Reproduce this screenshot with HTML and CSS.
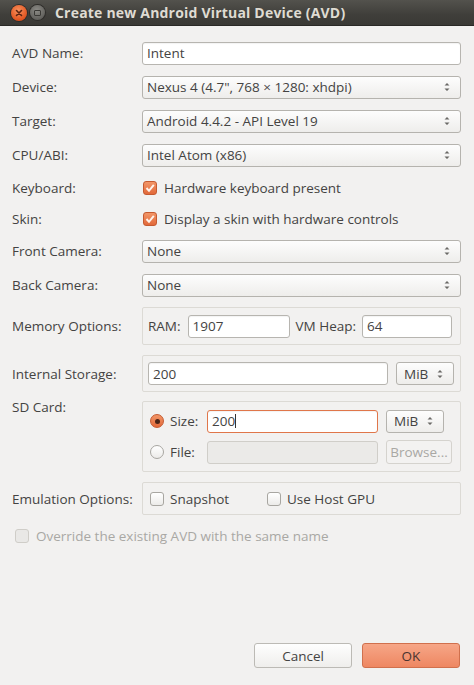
FILE: index.html
```html
<!DOCTYPE html>
<html>
<head>
<meta charset="utf-8">
<link rel="stylesheet" href="styles.css">
</head>
<body>
<div class="window">
  <div class="titlebar">
    <span class="wbtn close"><svg width="8" height="8" viewBox="0 0 8 8"><path d="M1.5 1.5 L6.5 6.5 M6.5 1.5 L1.5 6.5" stroke="#5a2412" stroke-width="1.6" stroke-linecap="round"/></svg></span>
    <span class="wbtn min"><span class="sq"></span></span>
    <span class="title">Create new Android Virtual Device (AVD)</span>
  </div>

  <div class="content">
    <div class="row h34"><span class="lbl">AVD Name:</span><div class="input">Intent</div></div>
    <div class="row h34"><span class="lbl">Device:</span><div class="select"><span>Nexus 4 (4.7", 768 × 1280: xhdpi)</span><svg class="spin" width="6" height="10" viewBox="0 0 6 10"><path d="M0.5 3.5 L3 1 L5.5 3.5Z M0.5 6.5 L3 9 L5.5 6.5Z" fill="#6a6966"/></svg></div></div>
    <div class="row h34"><span class="lbl">Target:</span><div class="select"><span>Android 4.4.2 - API Level 19</span><svg class="spin" width="6" height="10" viewBox="0 0 6 10"><path d="M0.5 3.5 L3 1 L5.5 3.5Z M0.5 6.5 L3 9 L5.5 6.5Z" fill="#6a6966"/></svg></div></div>
    <div class="row h34"><span class="lbl">CPU/ABI:</span><div class="select"><span>Intel Atom (x86)</span><svg class="spin" width="6" height="10" viewBox="0 0 6 10"><path d="M0.5 3.5 L3 1 L5.5 3.5Z M0.5 6.5 L3 9 L5.5 6.5Z" fill="#6a6966"/></svg></div></div>
    <div class="row h31"><span class="lbl">Keyboard:</span><div class="check"><span class="cb on"><svg width="12" height="12" viewBox="0 0 12 12"><path d="M2.5 6 L5 8.8 L9.8 2.8" fill="none" stroke="#fff3ec" stroke-width="2"/></svg></span><span class="ct">Hardware keyboard present</span></div></div>
    <div class="row h31"><span class="lbl">Skin:</span><div class="check"><span class="cb on"><svg width="12" height="12" viewBox="0 0 12 12"><path d="M2.5 6 L5 8.8 L9.8 2.8" fill="none" stroke="#fff3ec" stroke-width="2"/></svg></span><span class="ct">Display a skin with hardware controls</span></div></div>
    <div class="row h34"><span class="lbl">Front Camera:</span><div class="select"><span>None</span><svg class="spin" width="6" height="10" viewBox="0 0 6 10"><path d="M0.5 3.5 L3 1 L5.5 3.5Z M0.5 6.5 L3 9 L5.5 6.5Z" fill="#6a6966"/></svg></div></div>
    <div class="row h34"><span class="lbl">Back Camera:</span><div class="select"><span>None</span><svg class="spin" width="6" height="10" viewBox="0 0 6 10"><path d="M0.5 3.5 L3 1 L5.5 3.5Z M0.5 6.5 L3 9 L5.5 6.5Z" fill="#6a6966"/></svg></div></div>

    <div class="row grp-row mem"><span class="lbl">Memory Options:</span>
      <div class="group g-mem">
        <span class="gl">RAM:</span><div class="input ram">1907</div>
        <span class="gl vm">VM Heap:</span><div class="input heap">64</div>
      </div>
    </div>

    <div class="row grp-row stor"><span class="lbl">Internal Storage:</span>
      <div class="group g-stor">
        <div class="input istor">200</div>
        <div class="select unit"><span>MiB</span><svg class="spin" width="6" height="10" viewBox="0 0 6 10"><path d="M0.5 3.5 L3 1 L5.5 3.5Z M0.5 6.5 L3 9 L5.5 6.5Z" fill="#6a6966"/></svg></div>
      </div>
    </div>

    <div class="row grp-row sd"><span class="lbl top">SD Card:</span>
      <div class="group g-sd">
        <div class="sdline">
          <span class="radio on"><span class="dot"></span></span><span class="rl">Size:</span>
          <div class="input focus sdin">200<span class="caret"></span></div>
          <div class="select unit"><span>MiB</span><svg class="spin" width="6" height="10" viewBox="0 0 6 10"><path d="M0.5 3.5 L3 1 L5.5 3.5Z M0.5 6.5 L3 9 L5.5 6.5Z" fill="#6a6966"/></svg></div>
        </div>
        <div class="sdline">
          <span class="radio"></span><span class="rl">File:</span>
          <div class="input disabled sdin"></div>
          <div class="btn browse">Browse...</div>
        </div>
      </div>
    </div>

    <div class="row grp-row emu"><span class="lbl">Emulation Options:</span>
      <div class="group g-emu">
        <span class="cb"></span><span class="ct snap">Snapshot</span>
        <span class="cb"></span><span class="ct">Use Host GPU</span>
      </div>
    </div>

    <div class="override"><span class="cb dis"></span><span class="ct">Override the existing AVD with the same name</span></div>
  </div>

  <div class="buttons">
    <div class="btn big">Cancel</div>
    <div class="btn big ok">OK</div>
  </div>
</div>
</body>
</html>
```

FILE: styles.css
```css
* { box-sizing: border-box; }
html, body { margin: 0; padding: 0; }
body {
  width: 474px;
  height: 685px;
  overflow: hidden;
  background: #f2f1f0;
  font-family: "Open Sans", "DejaVu Sans", sans-serif;
  font-size: 13.5px;
  color: #444342;
}
.window {
  height: 685px;
  display: flex;
  flex-direction: column;
}
.titlebar {
  height: 26px;
  flex: none;
  background: linear-gradient(#53524d, #3f3e3a 60%, #3a3935);
  border-bottom: 1px solid #2a2926;
  display: flex;
  align-items: center;
  padding-left: 11px;
}
.wbtn {
  border-radius: 50%;
  display: flex;
  align-items: center;
  justify-content: center;
}
.close {
  width: 16px; height: 16px;
  background: radial-gradient(circle at 45% 35%, #f8915d, #e0531f 70%, #c2441a);
  box-shadow: 0 0 0 1px #2e2d2a;
}
.min {
  width: 15px; height: 15px;
  margin-left: 3px;
  background: radial-gradient(circle at 45% 35%, #8c8b86, #5f5e5a 75%);
  box-shadow: 0 0 0 1px #2e2d2a;
}
.min .sq {
  width: 7px; height: 6px;
  border: 1.5px solid #3a3935;
  border-radius: 1px;
}
.title {
  margin-left: 10px;
  color: #dfdbd2;
  font-weight: bold;
  font-size: 14px;
  letter-spacing: 0.2px;
}
.content {
  padding: 10px 13px 0 12px;
}
.row {
  display: grid;
  grid-template-columns: 130px 1fr;
  align-items: center;
}
.h34 { height: 34px; }
.h31 { height: 31px; }
.lbl { white-space: nowrap; }
.lbl.top { align-self: start; margin-top: -3px; }

.input {
  height: 23px;
  background: #fff;
  border: 1px solid #b7b5b0;
  border-radius: 3px;
  padding: 0 4px;
  display: flex;
  align-items: center;
  box-shadow: inset 0 1px 1px rgba(0,0,0,0.05);
}
.input.focus { border-color: #e0764a; }
.input.disabled { background: #ebeae8; border-color: #d0cec9; box-shadow: none; }
.caret { width: 1px; height: 14px; background: #333; margin-left: 0; }

.select {
  height: 23px;
  background: linear-gradient(#fdfdfd, #eeedeb);
  border: 1px solid #b5b3ae;
  border-radius: 3px;
  padding: 0 10px 0 4px;
  display: flex;
  align-items: center;
  justify-content: space-between;
}
.spin { flex: none; }

.check { display: flex; align-items: center; }
.cb {
  width: 14px; height: 14px;
  flex: none;
  border: 1px solid #a8a6a1;
  border-radius: 3px;
  background: linear-gradient(#ffffff, #ecebe9);
  display: flex;
  align-items: center;
  justify-content: center;
}
.cb.on {
  background: linear-gradient(#f29668, #e2693a);
  border-color: #c55a30;
}
.check .cb { margin-left: 1px; }
.check .ct { margin-left: 7px; white-space: nowrap; }

.grp-row { align-items: center; }
.group {
  border: 1px solid #dcdad5;
  border-radius: 2px;
  background: #f2f1f0;
}
.mem { margin-top: 5px; }
.g-mem {
  height: 38px;
  display: flex;
  align-items: center;
  padding: 0 6px 0 5px;
}
.g-mem .gl { white-space: nowrap; }
.ram { width: 102px; margin-left: 7px; }
.vm { margin-left: 6px; }
.heap { width: 90px; margin-left: 6px; }

.stor { margin-top: 10px; }
.g-stor {
  height: 37px;
  display: flex;
  align-items: center;
  padding: 0 6px 0 5px;
}
.istor { width: 240px; }
.unit { width: 58px; margin-left: 8px; padding-left: 7px; }

.sd { margin-top: 9px; }
.g-sd {
  height: 71px;
  padding: 7px 6px 0 7px;
  display: flex;
  flex-direction: column;
  gap: 7px;
}
.sdline { display: flex; align-items: center; height: 24px; }
.radio {
  width: 14px; height: 14px;
  flex: none;
  border-radius: 50%;
  border: 1px solid #a8a6a1;
  background: linear-gradient(#ffffff, #ecebe9);
  display: flex;
  align-items: center;
  justify-content: center;
}
.radio.on {
  background: linear-gradient(#f29668, #e2693a);
  border-color: #c55a30;
}
.radio .dot { width: 5px; height: 5px; border-radius: 50%; background: #4a2417; }
.rl { margin-left: 6px; width: 37px; }
.sdin { width: 171px; }
.btn {
  border: 1px solid #bcbab5;
  border-radius: 3px;
  background: linear-gradient(#fefefe, #efeeec);
  display: flex;
  align-items: center;
  justify-content: center;
}
.browse {
  width: 66px; height: 24px;
  margin-left: 8px;
  color: #a9a8a4;
  border-color: #d5d3ce;
  background: #f3f2f1;
}

.emu { margin-top: 10px; }
.g-emu {
  height: 33px;
  display: flex;
  align-items: center;
  padding-left: 7px;
}
.g-emu .ct { margin-left: 6px; }
.g-emu .snap { width: 97px; }

.override {
  display: flex;
  align-items: center;
  height: 30px;
  margin-top: 6px;
  padding-left: 3px;
  color: #a9a8a4;
}
.cb.dis { border-color: #cfcdc8; background: #e9e8e6; }
.override .ct { margin-left: 7px; }

.buttons {
  margin-top: auto;
  display: flex;
  justify-content: flex-end;
  gap: 10px;
  padding: 0 14px 17px 0;
}
.big {
  width: 98px;
  height: 25px;
  font-size: 13.5px;
}
.ok {
  background: linear-gradient(#f6a687, #ee8762);
  border-color: #d0704d;
  color: #4a3430;
}
```
